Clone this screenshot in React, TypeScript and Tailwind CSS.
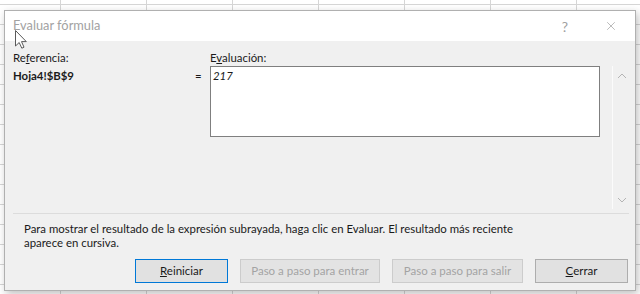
import { X } from 'lucide-react';

const cols = 8;
const rows = 16;

function SheetGrid() {
  const cells = [];
  for (let r = 0; r < rows; r++) {
    for (let c = 0; c < cols; c++) {
      cells.push(<div key={`${r}-${c}`} className="border-r border-b border-[#d6d6d6]" />);
    }
  }
  return (
    <div className="grid grid-cols-[61px_repeat(7,86px)] grid-rows-[5px_repeat(15,20px)] bg-white">
      {cells}
    </div>
  );
}

function Chevron({ up }: { up?: boolean }) {
  return (
    <svg width="10" height="6" viewBox="0 0 10 6" className="text-[#b4b4b4]">
      <path d={up ? 'M1 5 L5 1 L9 5' : 'M1 1 L5 5 L9 1'} fill="none" stroke="currentColor" strokeWidth="1" />
    </svg>
  );
}

function Btn({ children, variant, width }: { children: React.ReactNode; variant: 'focus' | 'normal' | 'disabled'; width: string }) {
  const styles = {
    focus: 'border-[#0078d7] bg-[#e1e1e1] text-[#1a1a1a]',
    normal: 'border-[#adadad] bg-[#e1e1e1] text-[#1a1a1a]',
    disabled: 'border-[#cccccc] bg-[#e3e3e3] text-[#a3a3a3]',
  }[variant];
  return (
    <button className={`h-[24px] ${width} border ${styles} text-[11.5px] leading-none flex items-center justify-center`}>
      {children}
    </button>
  );
}

export default function App() {
  return (
    <div className="relative w-[640px] h-[294px] overflow-hidden bg-white font-['Lato','Noto_Sans',sans-serif]">
      <SheetGrid />

      <div className="absolute left-[4px] top-[10px] w-[632px] h-[281px] border border-[#b0b0b0] shadow-[2px_3px_8px_rgba(0,0,0,0.25)] flex flex-col">
        <div className="h-[30px] bg-white flex items-center pl-[8px] pr-[17px]">
          <span className="text-[12.8px] text-[#a2a2a2]">Evaluar fórmula</span>
          <span className="ml-auto text-[14px] text-[#a0a0a0] mr-[36px]">?</span>
          <X size={14} strokeWidth={1} className="text-[#8a8a8a]" />
        </div>

        <div className="flex-1 bg-[#f0f0f0] flex flex-col text-[11.4px] text-[#1a1a1a]">
          <div className="h-[172px] flex pt-[9px] pl-[8px] pr-[6px]">
            <div className="w-[182px] flex flex-col">
              <span className="leading-[16px]">Re<span className="underline">f</span>erencia:</span>
              <span className="leading-[16px] pt-[2px] font-bold">Hoja4!$B$9</span>
            </div>
            <div className="w-[15px] pt-[18px] leading-[16px]">=</div>
            <div className="flex flex-col">
              <span className="leading-[16px]">E<span className="underline">v</span>aluación:</span>
              <div className="w-[390px] h-[71px] bg-white border border-[#7f7f7f] px-[2px] pt-[1px] leading-[16px] italic">
                217
              </div>
            </div>
            <div className="ml-[12px] mt-[16px] h-[143px] w-[17px] border-l border-[#fbfbfb] flex flex-col items-center justify-between pt-[7px] pb-[6px] pl-[2px]">
              <Chevron up />
              <Chevron />
            </div>
          </div>

          <div className="mx-[8px] mr-[6px] h-px bg-[#dcdcdc]" />

          <p className="pt-[8px] pl-[19px] leading-[14px]">
            Para mostrar el resultado de la expresión subrayada, haga clic en Evaluar. El resultado más reciente
            <br />
            aparece en cursiva.
          </p>

          <div className="mt-[9px] flex justify-end gap-[12px] pr-[7px]">
            <Btn variant="focus" width="w-[93px]">
              <span><span className="underline">R</span>einiciar</span>
            </Btn>
            <Btn variant="disabled" width="w-[140px]">Paso a paso para entrar</Btn>
            <Btn variant="disabled" width="w-[131px]">Paso a paso para salir</Btn>
            <Btn variant="normal" width="w-[93px]">
              <span><span className="underline">C</span>errar</span>
            </Btn>
          </div>
        </div>
      </div>

      <svg className="absolute left-[15px] top-[30px]" width="12" height="19" viewBox="0 0 12 19">
        <path d="M0.5 0.5 L0.5 16 L4.2 12.5 L6.8 18.2 L9 17.2 L6.5 11.6 L11.3 11.6 Z" fill="#ffffff" stroke="#5a5a5a" strokeWidth="1" strokeLinejoin="round" />
      </svg>
    </div>
  );
}
